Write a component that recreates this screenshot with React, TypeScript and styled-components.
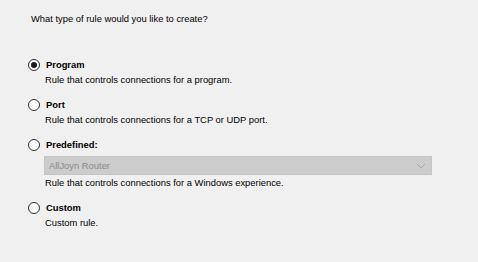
import React from "react";
import styled, { createGlobalStyle } from "styled-components";

const GlobalStyle = createGlobalStyle`
  html, body {
    margin: 0;
    padding: 0;
    background: #f0f0f0;
  }
  body {
    font-family: "Liberation Sans", Arial, sans-serif;
    font-size: 9.4px;
    line-height: 15px;
    color: #000;
  }
`;

const Page = styled.div`
  width: 478px;
  height: 262px;
  box-sizing: border-box;
  padding: 11px 0 0 0;
  display: flex;
  flex-direction: column;
  background: #f0f0f0;
`;

const Question = styled.div`
  padding-left: 31px;
  height: 15px;
`;

const Options = styled.div`
  margin-top: 31px;
  padding-left: 28px;
  display: flex;
  flex-direction: column;
  gap: 10px;
`;

const Option = styled.div`
  display: flex;
  flex-direction: column;
`;

const OptionHead = styled.label`
  display: flex;
  align-items: center;
  gap: 6px;
  height: 15px;
  cursor: default;
`;

const Radio = styled.span<{ $checked?: boolean }>`
  position: relative;
  width: 12px;
  height: 12px;
  box-sizing: border-box;
  border: 1px solid #2b2b2b;
  border-radius: 50%;
  background: #fff;
  flex: none;
  &::after {
    content: "";
    display: ${(p) => (p.$checked ? "block" : "none")};
    position: absolute;
    left: 2px;
    top: 2px;
    width: 6px;
    height: 6px;
    border-radius: 50%;
    background: #1a1a1a;
  }
`;

const Title = styled.span`
  font-weight: bold;
`;

const Body = styled.div`
  padding-left: 17px;
  display: flex;
  flex-direction: column;
`;

const Desc = styled.div`
  height: 15px;
`;

const Select = styled.div`
  margin: 4px 0 0 -1px;
  width: 388px;
  height: 19px;
  box-sizing: border-box;
  background: #cccccc;
  border: 1px solid #c5c5c5;
  display: flex;
  align-items: center;
  justify-content: space-between;
  padding: 0 5px 0 4px;
  color: #8a8a8a;
`;

const Chevron = () => (
  <svg width="10" height="6" viewBox="0 0 10 6">
    <path d="M1 1 L5 5 L9 1" fill="none" stroke="#a8a8a8" strokeWidth="1" />
  </svg>
);

type Opt = {
  title: string;
  desc: string;
  checked?: boolean;
  select?: string;
};

const options: Opt[] = [
  { title: "Program", desc: "Rule that controls connections for a program.", checked: true },
  { title: "Port", desc: "Rule that controls connections for a TCP or UDP port." },
  {
    title: "Predefined:",
    desc: "Rule that controls connections for a Windows experience.",
    select: "AllJoyn Router",
  },
  { title: "Custom", desc: "Custom rule." },
];

export default function App() {
  return (
    <>
      <GlobalStyle />
      <Page>
        <Question>What type of rule would you like to create?</Question>
        <Options>
          {options.map((o) => (
            <Option key={o.title}>
              <OptionHead>
                <Radio $checked={o.checked} />
                <Title>{o.title}</Title>
              </OptionHead>
              <Body>
                {o.select && (
                  <Select>
                    <span>{o.select}</span>
                    <Chevron />
                  </Select>
                )}
                <Desc>{o.desc}</Desc>
              </Body>
            </Option>
          ))}
        </Options>
      </Page>
    </>
  );
}
